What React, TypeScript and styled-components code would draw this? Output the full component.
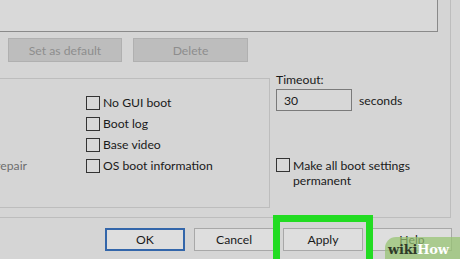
import React from 'react';
import styled, { createGlobalStyle } from 'styled-components';

const GlobalStyle = createGlobalStyle`
    html, body {
        margin: 0;
        padding: 0;
        background: #d5d5d5;
    }
    body {
        font-family: Lato, "Noto Sans", sans-serif;
        font-size: 12.2px;
        color: #1a1a1a;
    }
`;

const Frame = styled.div`
    position: relative;
    width: 460px;
    height: 259px;
    overflow: hidden;
    background: #d5d5d5;
`;

const TabPage = styled.div`
    box-sizing: border-box;
    width: 451px;
    height: 218px;
    border-right: 1px solid #bdbdbd;
    border-bottom: 1px solid #bdbdbd;
`;

const ListBox = styled.div`
    box-sizing: border-box;
    width: 438px;
    height: 32px;
    background: #d9d9d9;
    border-right: 1px solid #8a8a8a;
    border-bottom: 1px solid #8a8a8a;
`;

const ActionRow = styled.div`
    display: flex;
    gap: 11px;
    padding: 6px 0 0 8px;
`;

const GrayButton = styled.div<{ $width: number }>`
    box-sizing: border-box;
    width: ${(p) => p.$width}px;
    height: 24px;
    display: flex;
    align-items: center;
    justify-content: center;
    background: #bdbdbd;
    border: 1px solid #b0b0b0;
    color: #8d8d8d;
`;

const Options = styled.div`
    display: flex;
    margin-top: 10px;
`;

const BootGroup = styled.div`
    box-sizing: border-box;
    width: 270px;
    height: 130px;
    margin-top: 6px;
    padding-top: 17px;
    border-top: 1px solid #bdbdbd;
    border-right: 1px solid #bdbdbd;
    border-bottom: 1px solid #bdbdbd;
    display: grid;
    grid-template-columns: 86px 1fr;
    grid-auto-rows: 21px;
    align-content: start;
`;

const SideLabel = styled.div`
    overflow: hidden;
    display: flex;
    justify-content: flex-end;
    align-items: flex-start;
    padding-right: 59px;
    white-space: nowrap;
    color: #6e6e6e;
    line-height: 14px;
`;

const CheckRow = styled.label`
    display: flex;
    align-items: flex-start;
    gap: 3px;
    line-height: 14px;
    white-space: nowrap;
`;

const Box = styled.span`
    box-sizing: border-box;
    flex: none;
    width: 14px;
    height: 14px;
    border: 1px solid #333333;
    background: #d8d8d8;
`;

const TimeoutCol = styled.div`
    padding-left: 6px;
    display: flex;
    flex-direction: column;
`;

const FieldLabel = styled.div`
    line-height: 16px;
`;

const FieldRow = styled.div`
    display: flex;
    align-items: center;
    gap: 7px;
    margin-top: 1px;
`;

const TextInput = styled.div`
    box-sizing: border-box;
    width: 76px;
    height: 22px;
    padding-left: 7px;
    display: flex;
    align-items: center;
    border: 1px solid #7a7a7a;
    background: #d7d7d7;
`;

const PermanentRow = styled(CheckRow)`
    margin-top: 47px;
    line-height: 15px;
    white-space: normal;
    width: 150px;
`;

const Footer = styled.div`
    display: flex;
    gap: 9px;
    margin-top: 10px;
    padding-left: 105px;
`;

const DialogButton = styled.div<{ $default?: boolean }>`
    box-sizing: border-box;
    flex: none;
    width: 80px;
    height: 23px;
    display: flex;
    align-items: center;
    justify-content: center;
    background: #dedede;
    border: ${(p) => (p.$default ? '2px solid #3366aa' : '1px solid #a8a8a8')};
`;

const Highlight = styled.div`
    position: absolute;
    left: 273px;
    top: 215px;
    width: 100px;
    height: 52px;
    box-sizing: border-box;
    border: 7px solid #22dc22;
`;

const Badge = styled.div`
    position: absolute;
    left: 385px;
    top: 237px;
    right: 0;
    bottom: 0;
    display: flex;
    align-items: center;
    padding: 2px 0 0 3px;
    border-top-left-radius: 11px;
    background: rgba(150, 196, 112, 0.72);
    font-family: "DejaVu Serif", "Liberation Serif", serif;
    font-weight: bold;
    font-size: 13px;
    letter-spacing: -0.2px;

    > .wiki {
        color: #2e3a28;
    }

    > .how {
        color: #ffffff;
    }
`;

const bootChecks = ['No GUI boot', 'Boot log', 'Base video', 'OS boot information'];

const App: React.FC = () => {
    return (
        <Frame>
            <GlobalStyle />
            <TabPage>
                <ListBox />
                <ActionRow>
                    <GrayButton $width={114}>Set as default</GrayButton>
                    <GrayButton $width={115}>Delete</GrayButton>
                </ActionRow>
                <Options>
                    <BootGroup>
                        {bootChecks.map((label, i) => (
                            <React.Fragment key={label}>
                                <SideLabel>{i === 3 ? 'Active Directory repair' : ''}</SideLabel>
                                <CheckRow>
                                    <Box />
                                    {label}
                                </CheckRow>
                            </React.Fragment>
                        ))}
                    </BootGroup>
                    <TimeoutCol>
                        <FieldLabel>Timeout:</FieldLabel>
                        <FieldRow>
                            <TextInput>30</TextInput>
                            seconds
                        </FieldRow>
                        <PermanentRow>
                            <Box />
                            <span>Make all boot settings permanent</span>
                        </PermanentRow>
                    </TimeoutCol>
                </Options>
            </TabPage>
            <Footer>
                <DialogButton $default>OK</DialogButton>
                <DialogButton>Cancel</DialogButton>
                <DialogButton>Apply</DialogButton>
                <DialogButton>Help</DialogButton>
            </Footer>
            <Highlight />
            <Badge>
                <span className="wiki">wiki</span>
                <span className="how">How</span>
            </Badge>
        </Frame>
    );
};

export default App;
